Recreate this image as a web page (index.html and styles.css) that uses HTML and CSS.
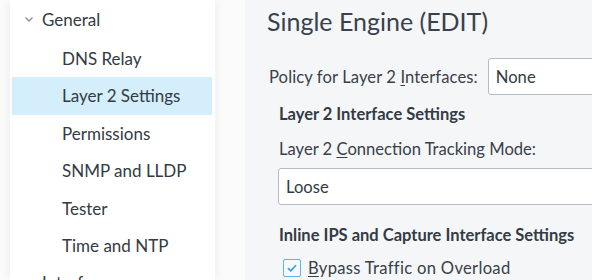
FILE: index.html
```html
<!DOCTYPE html>
<html>
<head>
<meta charset="utf-8">
<link rel="stylesheet" href="styles.css">
</head>
<body>
<div class="page">
  <nav class="sidebar">
    <div class="group">
      <svg class="chev" width="10" height="7" viewBox="0 0 10 7"><path d="M1.5 1.5 L5 5 L8.5 1.5" fill="none" stroke="#8a939c" stroke-width="1.4"/></svg>
      <span>General</span>
    </div>
    <div class="item">DNS Relay</div>
    <div class="item selected">Layer 2 Settings</div>
    <div class="item">Permissions</div>
    <div class="item">SNMP and LLDP</div>
    <div class="item">Tester</div>
    <div class="item">Time and NTP</div>
    <div class="group">
      <svg class="chev" width="10" height="7" viewBox="0 0 10 7"><path d="M1.5 1.5 L5 5 L8.5 1.5" fill="none" stroke="#8a939c" stroke-width="1.4"/></svg>
      <span>Interfaces</span>
    </div>
  </nav>
  <main class="main">
    <h1 class="title">Single Engine (EDIT)</h1>
    <div class="row">
      <label class="label">Policy for Layer 2 <u>I</u>nterfaces:</label>
      <div class="select">None</div>
    </div>
    <div class="section">
      <h2 class="heading">Layer 2 Interface Settings</h2>
      <div class="label">Layer 2 <u>C</u>onnection Tracking Mode:</div>
      <div class="select wide">Loose</div>
      <h2 class="heading second">Inline IPS and Capture Interface Settings</h2>
      <div class="check-row">
        <span class="checkbox"><svg width="12" height="10" viewBox="0 0 12 10"><path d="M2 5.2 L4.8 7.8 L10 2.2" fill="none" stroke="#3a9ad9" stroke-width="1.6"/></svg></span>
        <span class="label bypass"><u>B</u>ypass Traffic on Overload</span>
      </div>
    </div>
  </main>
</div>
</body>
</html>
```
FILE: styles.css
```css
html, body {
  margin: 0;
  padding: 0;
}
body {
  width: 592px;
  height: 280px;
  overflow: hidden;
  background: #fbfbfc;
  font-family: Lato, "Noto Sans", sans-serif;
  color: #333b44;
}
.page {
  display: flex;
  height: 280px;
  overflow: hidden;
}
.sidebar {
  margin-left: 10px;
  width: 205px;
  flex: none;
  background: #fff;
  box-shadow: 0 0 10px rgba(0, 0, 0, 0.07);
  padding-top: 2px;
  box-sizing: border-box;
}
.group {
  display: flex;
  align-items: center;
  height: 37.5px;
  padding-left: 14px;
  font-size: 17px;
  margin-top: -1px;
  margin-bottom: 1px;
}
.chev {
  margin-right: 8px;
}
.item {
  height: 37.5px;
  display: flex;
  align-items: center;
  padding-left: 50px;
  margin-left: 2px;
  margin-right: 3px;
  font-size: 17px;
}
.selected {
  background: #d5eefb;
}
.main {
  margin-left: 30px;
  flex: 1;
  background: #f5f6f8;
  padding-left: 22px;
  overflow: hidden;
  white-space: nowrap;
}
.title {
  margin: 6px 0 0 0;
  font-size: 25px;
  font-weight: 400;
  color: #39424c;
  line-height: 30px;
}
.row {
  display: flex;
  align-items: center;
  margin-top: 22px;
  margin-left: 2px;
}
.label {
  font-size: 16.6px;
  color: #38414a;
}
.row .label {
  margin-right: 10px;
  flex: none;
  letter-spacing: 0.1px;
}
.select {
  height: 37px;
  box-sizing: border-box;
  border: 1px solid #b3bcc6;
  border-radius: 3px;
  background: #fff;
  display: flex;
  align-items: center;
  padding-left: 7px;
  font-size: 16.6px;
  color: #333b44;
  width: 200px;
  flex: none;
}
.section {
  margin-left: 12px;
}
.heading {
  font-size: 16.5px;
  font-weight: 700;
  margin: 9px 0 15px 0;
  line-height: 20px;
  color: #333b44;
}
.section .label {
  line-height: 20px;
}
.select.wide {
  width: 400px;
  margin-top: 9px;
  margin-left: -1px;
}
.heading.second {
  margin-top: 20px;
  margin-bottom: 13px;
}
.check-row {
  display: flex;
  align-items: center;
  margin-left: 4px;
}
.checkbox {
  width: 18px;
  height: 18px;
  box-sizing: border-box;
  border: 1.5px solid #5fb3e6;
  border-radius: 2px;
  background: #f3f9fd;
  display: flex;
  align-items: center;
  justify-content: center;
  margin-right: 7px;
  flex: none;
}
.bypass {
  letter-spacing: 0.3px;
}
u {
  text-decoration-thickness: 1px;
  text-underline-offset: 2px;
}
```
